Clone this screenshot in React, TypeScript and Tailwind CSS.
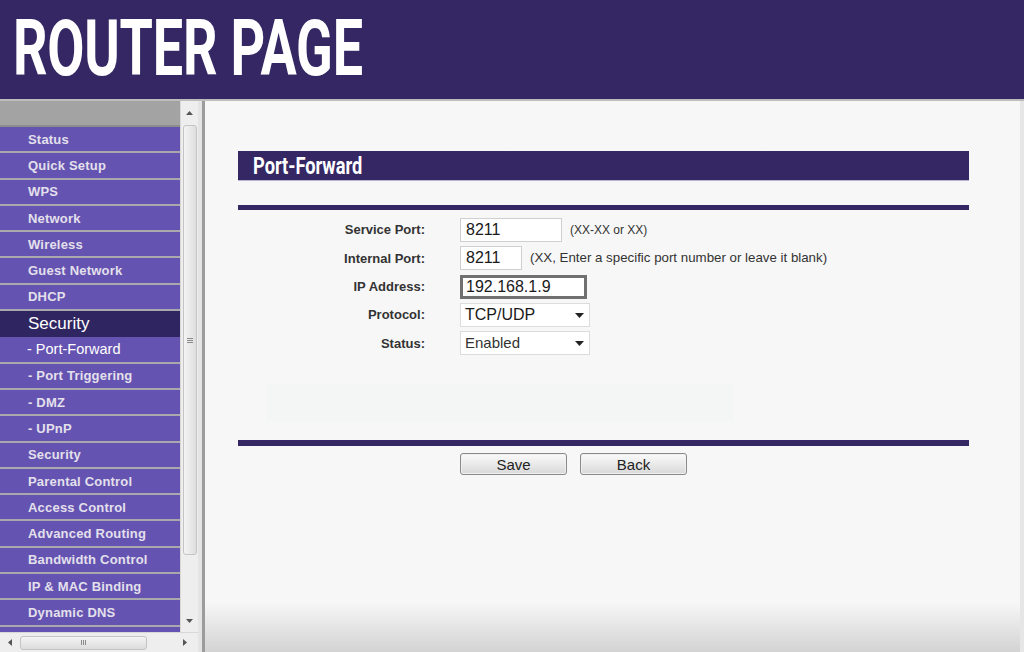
import React from "react";

const menu: { label: string; kind?: "sel" | "sub" | "subsel" }[] = [
  { label: "Status" },
  { label: "Quick Setup" },
  { label: "WPS" },
  { label: "Network" },
  { label: "Wireless" },
  { label: "Guest Network" },
  { label: "DHCP" },
  { label: "Security", kind: "sel" },
  { label: "- Port-Forward", kind: "subsel" },
  { label: "- Port Triggering", kind: "sub" },
  { label: "- DMZ", kind: "sub" },
  { label: "- UPnP", kind: "sub" },
  { label: "Security" },
  { label: "Parental Control" },
  { label: "Access Control" },
  { label: "Advanced Routing" },
  { label: "Bandwidth Control" },
  { label: "IP & MAC Binding" },
  { label: "Dynamic DNS" },
];

const arial = { fontFamily: '"Liberation Sans", Arial, sans-serif' };

function Caret() {
  return (
    <svg width="9" height="5" viewBox="0 0 9 5" className="shrink-0">
      <path d="M0 0 L9 0 L4.5 5 Z" fill="#222" />
    </svg>
  );
}

export default function App() {
  return (
    <div
      className="w-[1024px] h-[652px] overflow-hidden flex flex-col bg-[#f7f7f7]"
      style={arial}
    >
      {/* Header */}
      <header className="h-[99px] shrink-0 bg-[#342763] flex items-center pl-[13px] overflow-hidden">
        <h1
          className="text-white font-bold text-[77px] leading-none origin-left scale-x-[0.7] whitespace-nowrap mt-[0px] tracking-[-0.3px]"
          style={{ fontFamily: 'Roboto, "Liberation Sans", sans-serif' }}
        >
          ROUTER PAGE
        </h1>
      </header>
      <div className="h-[2px] shrink-0 bg-[#bdbdbd]" />

      {/* Body */}
      <div className="flex flex-1 min-h-0">
        {/* Sidebar frame */}
        <div className="w-[198px] shrink-0 flex flex-col bg-[#ededed]">
          <div className="flex flex-1 min-h-0">
            <nav className="w-[180px] flex flex-col bg-[#6553b1]">
              <div className="h-[26px] shrink-0 bg-[#a3a3a3] border-b-2 border-[#8d8d8d]" />
              {menu.map((m, i) => {
                const sel = m.kind === "sel";
                const subsel = m.kind === "subsel";
                return (
                  <div
                    key={i}
                    className={
                      "h-[26.3px] shrink-0 flex items-center border-b-2 " +
                      (sel
                        ? "bg-[#2f2560] border-[#2f2560] pl-[28px]"
                        : "border-[#a9a9ad] pl-[28px]")
                    }
                  >
                    <span
                      className={
                        sel
                          ? "text-white text-[17px] leading-none"
                          : subsel
                          ? "text-white text-[14.5px] leading-none -ml-[1px]"
                          : "text-[#e3e0ec] text-[13px] font-bold leading-none tracking-[0.2px]"
                      }
                    >
                      {m.label}
                    </span>
                  </div>
                );
              })}
            </nav>
            {/* vertical scrollbar */}
            <div className="w-[18px] flex flex-col items-center bg-[#eeeeee] border-l border-[#d8d8d8]">
              <div className="h-[24px] flex items-center justify-center">
                <svg width="7" height="4" viewBox="0 0 7 4">
                  <path d="M0 4 L3.5 0 L7 4 Z" fill="#555" />
                </svg>
              </div>
              <div className="w-[14px] h-[430px] rounded-[3px] border border-[#c4c4c4] bg-gradient-to-r from-[#f4f4f4] to-[#dedede] flex items-center justify-center">
                <div className="flex flex-col gap-[1px]">
                  <div className="w-[6px] h-[1px] bg-[#8a8a8a]" />
                  <div className="w-[6px] h-[1px] bg-[#8a8a8a]" />
                  <div className="w-[6px] h-[1px] bg-[#8a8a8a]" />
                </div>
              </div>
              <div className="flex-1" />
              <div className="h-[22px] flex items-center justify-center">
                <svg width="7" height="4" viewBox="0 0 7 4">
                  <path d="M0 0 L7 0 L3.5 4 Z" fill="#555" />
                </svg>
              </div>
            </div>
          </div>
          {/* horizontal scrollbar */}
          <div className="h-[20px] shrink-0 flex items-center bg-[#eeeeee] border-t border-[#d8d8d8]">
            <div className="w-[20px] flex items-center justify-center">
              <svg width="4" height="7" viewBox="0 0 4 7">
                <path d="M4 0 L0 3.5 L4 7 Z" fill="#555" />
              </svg>
            </div>
            <div className="w-[127px] h-[14px] rounded-[3px] border border-[#c4c4c4] bg-gradient-to-b from-[#f4f4f4] to-[#dcdcdc] flex items-center justify-center gap-[1px]">
              <div className="w-[1px] h-[5px] bg-[#8a8a8a]" />
              <div className="w-[1px] h-[5px] bg-[#8a8a8a]" />
              <div className="w-[1px] h-[5px] bg-[#8a8a8a]" />
            </div>
            <div className="flex-1" />
            <div className="w-[26px] flex items-center justify-center">
              <svg width="4" height="7" viewBox="0 0 4 7">
                <path d="M0 0 L4 3.5 L0 7 Z" fill="#555" />
              </svg>
            </div>
          </div>
        </div>

        {/* frame divider */}
        <div className="w-[4px] shrink-0 bg-[#e4e4e4]" />
        <div className="w-[3px] shrink-0 bg-[#9c9c9c]" />

        {/* Main content */}
        <main className="flex-1 flex flex-col bg-gradient-to-b from-[#f7f7f7] from-[91%] to-[#d3d3d3] border-r-4 border-[#e6e6e6]">
          <div className="pl-[33px] w-[764px] pt-[50px]">
            <div className="h-[30px] bg-[#342763] flex items-center pl-[15px] border-b border-[#b9b5cc]">
              <span
                className="text-white font-bold text-[24px] leading-none origin-left scale-x-[0.76] whitespace-nowrap"
                style={{ fontFamily: 'Roboto, "Liberation Sans", sans-serif' }}
              >
                Port-Forward
              </span>
            </div>
            <div className="h-[5px] mt-[24px] bg-[#342763]" />

            <div className="mt-[6px] flex flex-col text-[#333]">
              <Row label="Service Port:">
                <div className="w-[102px] h-[24px] border border-[#cfcfcf] bg-white flex items-center pl-[5px] text-[16px] text-[#1a1a1a]">
                  8211
                </div>
                <span className="ml-[8px] text-[12px] text-[#333]">(XX-XX or XX)</span>
              </Row>
              <Row label="Internal Port:">
                <div className="w-[62px] h-[24px] border border-[#cfcfcf] bg-white flex items-center pl-[5px] text-[16px] text-[#1a1a1a]">
                  8211
                </div>
                <span className="ml-[8px] text-[13.3px] text-[#333]">
                  (XX, Enter a specific port number or leave it blank)
                </span>
              </Row>
              <Row label="IP Address:">
                <div className="w-[127px] h-[24px] border-[3px] border-[#707070] bg-white flex items-center pl-[3px] text-[16px] text-[#1a1a1a]">
                  192.168.1.9
                </div>
              </Row>
              <Row label="Protocol:">
                <div className="w-[130px] h-[24px] border border-[#dcdcdc] bg-white flex items-center justify-between pl-[4px] pr-[5px] text-[16px] text-[#1a1a1a]">
                  <span>TCP/UDP</span>
                  <Caret />
                </div>
              </Row>
              <Row label="Status:">
                <div className="w-[130px] h-[24px] border border-[#dcdcdc] bg-white flex items-center justify-between pl-[4px] pr-[5px] text-[15px] text-[#333]">
                  <span>Enabled</span>
                  <Caret />
                </div>
              </Row>
            </div>

            <div className="ml-[29px] mt-[27px] w-[466px] h-[38px] bg-[#f4f6f6]" />

            <div className="h-[6px] mt-[18px] bg-[#342763]" />
            <div className="flex gap-[13px] pl-[222px] mt-[7px]">
              <Btn>Save</Btn>
              <Btn>Back</Btn>
            </div>
          </div>
        </main>
      </div>
    </div>
  );
}

function Row({ label, children }: { label: string; children: React.ReactNode }) {
  return (
    <div className="h-[28.3px] flex items-center">
      <div className="w-[187px] text-right text-[13px] font-bold text-[#333]">
        {label}
      </div>
      <div className="ml-[35px] flex items-center">{children}</div>
    </div>
  );
}

function Btn({ children }: { children: React.ReactNode }) {
  return (
    <button className="w-[107px] h-[22px] rounded-[3px] border border-[#8a8a8a] bg-gradient-to-b from-[#fbfbfb] to-[#d9d9d9] text-[15px] text-[#222] leading-none shadow-[inset_0_0_0_1px_#f0f0f0]">
      {children}
    </button>
  );
}
